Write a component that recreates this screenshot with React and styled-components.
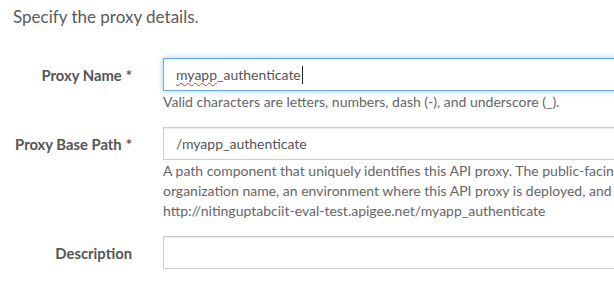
import styled, { createGlobalStyle } from "styled-components";

const GlobalStyle = createGlobalStyle`
  html, body {
    margin: 0;
    padding: 0;
    background: #fff;
    overflow: hidden;
  }
  body {
    font-family: Lato, "Open Sans", sans-serif;
  }
`;

const fields = [
  {
    id: "name",
    label: "Proxy Name",
    required: true,
    value: "myapp_authenticate",
    focused: true,
    help: ["Valid characters are letters, numbers, dash (-), and underscore (_)."],
  },
  {
    id: "path",
    label: "Proxy Base Path",
    required: true,
    value: "/myapp_authenticate",
    help: [
      "A path component that uniquely identifies this API proxy. The public-facing URL of this API proxy is comprised of your",
      "organization name, an environment where this API proxy is deployed, and this Proxy Base Path. For example:",
      "http://nitinguptabciit-eval-test.apigee.net/myapp_authenticate",
    ],
  },
  { id: "desc", label: "Description", value: "", help: [] },
];

const App = () => {
  return (
    <Page>
      <GlobalStyle />
      <Heading>Specify the proxy details.</Heading>
      <Form>
        {fields.map((f) => (
          <Row key={f.id}>
            <Label>
              {f.label}
              {f.required && <Star>*</Star>}
            </Label>
            <Control>
              <Field focused={f.focused}>
                {f.focused ? (
                  <>
                    <Misspelled>myapp</Misspelled>
                    <span>_authenticate</span>
                    <Caret />
                  </>
                ) : (
                  f.value
                )}
              </Field>
              {f.help.length > 0 && (
                <Help>
                  {f.help.map((line, i) => (
                    <div key={i}>{line}</div>
                  ))}
                </Help>
              )}
            </Control>
          </Row>
        ))}
      </Form>
    </Page>
  );
};

const Page = styled.div`
  width: 614px;
  height: 293px;
  padding: 4px 0 0 13px;
  box-sizing: border-box;
  overflow: hidden;
`;

const Heading = styled.div`
  font-size: 17px;
  line-height: 26px;
  color: #5a5a5a;
  margin-bottom: 28px;
`;

const Form = styled.div`
  display: flex;
  flex-direction: column;
  gap: 15px;
`;

const Row = styled.div`
  display: grid;
  grid-template-columns: 119px 520px;
  column-gap: 31px;
  align-items: start;
`;

const Label = styled.div`
  height: 33px;
  display: flex;
  align-items: center;
  justify-content: flex-end;
  font-size: 14.8px;
  font-weight: 700;
  color: #555;
  white-space: nowrap;
`;

const Star = styled.span`
  margin-left: 4px;
`;

const Control = styled.div`
  display: flex;
  flex-direction: column;
`;

const Field = styled.div`
  position: relative;
  height: 33px;
  box-sizing: border-box;
  padding: 0 12px;
  display: flex;
  align-items: center;
  font-size: 14px;
  color: #555;
  border: 1px solid ${(p) => (p.focused ? "#66afe9" : "#ccc")};
  box-shadow: ${(p) =>
    p.focused
      ? "inset 0 1px 1px rgba(0,0,0,.075), 0 0 6px rgba(102,175,233,.6)"
      : "inset 0 1px 1px rgba(0,0,0,.075)"};
  white-space: nowrap;
`;

const Misspelled = styled.span`
  text-decoration: underline wavy #e53935;
  text-decoration-thickness: 1px;
  text-underline-offset: 2px;
`;

const Caret = styled.span`
  display: inline-block;
  width: 1px;
  height: 18px;
  background: #222;
  margin-left: 1px;
`;

const Help = styled.div`
  margin-top: 1px;
  font-size: 14px;
  line-height: 20px;
  color: #666;
  white-space: nowrap;
`;

export default App;
